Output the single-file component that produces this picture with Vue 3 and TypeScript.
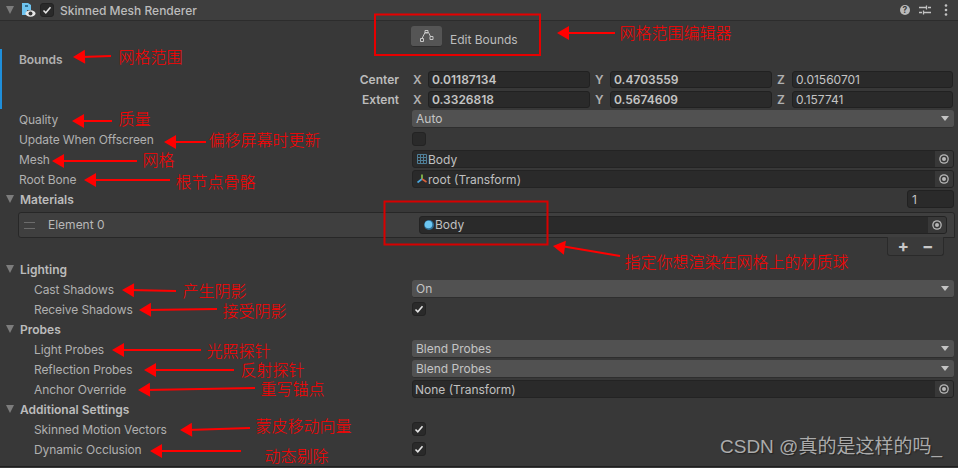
<script setup lang="ts">
interface Note { x: number; y: number; t: string }
interface Arrow { x1: number; y1: number; x2: number; y2: number }

const notes: Note[] = [
  { x: 118.5, y: 56, t: '网格范围' },
  { x: 619.5, y: 32, t: '网格范围编辑器' },
  { x: 118.5, y: 118, t: '质量' },
  { x: 208.5, y: 139, t: '偏移屏幕时更新' },
  { x: 142.5, y: 159, t: '网格' },
  { x: 175.5, y: 181, t: '根节点骨骼' },
  { x: 624.5, y: 261, t: '指定你想渲染在网格上的材质球' },
  { x: 182.5, y: 290, t: '产生阴影' },
  { x: 222.5, y: 310, t: '接受阴影' },
  { x: 206.5, y: 350, t: '光照探针' },
  { x: 240.5, y: 369, t: '反射探针' },
  { x: 260.5, y: 388, t: '重写锚点' },
  { x: 255.5, y: 425, t: '蒙皮移动向量' },
  { x: 264.5, y: 455, t: '动态剔除' },
]

const arrows: Arrow[] = [
  { x1: 111, y1: 56, x2: 73, y2: 57 },
  { x1: 615, y1: 33, x2: 557, y2: 33 },
  { x1: 112, y1: 121, x2: 72, y2: 121 },
  { x1: 206, y1: 142, x2: 164, y2: 142 },
  { x1: 137, y1: 161, x2: 52, y2: 161 },
  { x1: 170, y1: 180, x2: 84, y2: 180 },
  { x1: 620, y1: 256, x2: 553, y2: 246 },
  { x1: 176, y1: 291, x2: 122, y2: 290 },
  { x1: 217, y1: 309, x2: 139, y2: 310 },
  { x1: 201, y1: 350, x2: 112, y2: 350 },
  { x1: 234, y1: 370, x2: 144, y2: 370 },
  { x1: 255, y1: 388, x2: 138, y2: 390 },
  { x1: 250, y1: 428, x2: 180, y2: 430 },
  { x1: 241, y1: 451, x2: 150, y2: 451 },
]

function head(a: Arrow): string {
  const ang = Math.atan2(a.y1 - a.y2, a.x1 - a.x2)
  const len = 12
  const w = 7
  const bx = a.x2 + Math.cos(ang) * len
  const by = a.y2 + Math.sin(ang) * len
  const px = -Math.sin(ang) * w
  const py = Math.cos(ang) * w
  return `${a.x2},${a.y2} ${bx + px},${by + py} ${bx - px},${by - py}`
}
</script>

<template>
  <div class="page">
    <header class="head">
      <span class="tri"></span>
      <svg class="comp-icon" width="15" height="16" viewBox="0 0 15 16">
        <path d="M1 1h6l3 2v5H6v5H1z" fill="#6fc3ee" />
        <path d="M4 3h3v2H4z" fill="#2d6f93" />
        <ellipse cx="9.500" cy="11.500" rx="5" ry="3.200" fill="#e6e6e6" />
        <circle cx="9.500" cy="11.500" r="2" fill="#333" />
      </svg>
      <span class="check head-check"><svg width="10" height="10" viewBox="0 0 10 10"><path d="M1.500 5.500l2.300 2.300L8.500 2.200" fill="none" stroke="#e4e4e4" stroke-width="1.600" /></svg></span>
      <span class="title">Skinned Mesh Renderer</span>
      <span class="head-tools">
        <svg width="14" height="14" viewBox="0 0 14 14"><circle cx="7" cy="7" r="5" fill="#b9b9b9" /><text x="7" y="10" text-anchor="middle" font-size="8.500" font-weight="700" font-family="Inter" fill="#3c3c3c">?</text></svg>
        <svg width="14" height="14" viewBox="0 0 14 14"><path d="M1 4.500h7M10 4.500h3M8.500 2.500v4M1 9.500h3M6 9.500h7M5.500 7.500v4" stroke="#c4c4c4" stroke-width="1.300" fill="none" /></svg>
        <svg class="dots" width="6" height="14" viewBox="0 0 6 14"><circle cx="3" cy="2.500" r="1.300" fill="#c4c4c4" /><circle cx="3" cy="7" r="1.300" fill="#c4c4c4" /><circle cx="3" cy="11.500" r="1.300" fill="#c4c4c4" /></svg>
      </span>
    </header>

    <div class="edit-row">
      <button class="edit-btn">
        <svg width="16" height="14" viewBox="0 0 16 14"><path d="M3 9.500L6 3.500h3.500l2 4M1.500 9.500h3v3h-3zM11 7.500h3v3h-3zM6 1.500h3v2.500H6z" fill="none" stroke="#c8c8c8" stroke-width="1" /></svg>
      </button>
      <span class="edit-text">Edit Bounds</span>
    </div>

    <section class="bounds">
      <div class="row"><span class="label strong bound-label">Bounds</span></div>
      <div class="row vec">
        <span class="vec-label">Center</span>
        <span class="axis">X</span><span class="num strong">0.01187134</span>
        <span class="axis">Y</span><span class="num strong">0.4703559</span>
        <span class="axis">Z</span><span class="num">0.01560701</span>
      </div>
      <div class="row vec">
        <span class="vec-label">Extent</span>
        <span class="axis">X</span><span class="num strong">0.3326818</span>
        <span class="axis">Y</span><span class="num strong">0.5674609</span>
        <span class="axis">Z</span><span class="num">0.157741</span>
      </div>
    </section>

    <div class="row"><span class="label">Quality</span><span class="drop">Auto<i class="caret"></i></span></div>
    <div class="row"><span class="label">Update When Offscreen</span><span class="check"></span></div>
    <div class="row"><span class="label">Mesh</span>
      <span class="obj">
        <svg class="obj-icon" width="12" height="12" viewBox="0 0 12 12"><path d="M1.500 1.500h9v9h-9zM1.500 4.500h9M1.500 7.500h9M4.500 1.500v9M7.500 1.500v9" fill="none" stroke="#4f7f98" stroke-width="1" /></svg>
        <span>Body</span><i class="pick"><b></b></i>
      </span>
    </div>
    <div class="row"><span class="label">Root Bone</span>
      <span class="obj">
        <svg class="obj-icon" width="12" height="12" viewBox="0 0 12 12"><path d="M6 6V1.500" stroke="#8fcb4e" stroke-width="1.600" /><path d="M6 6L1.500 9.500" stroke="#4aa8e0" stroke-width="1.600" /><path d="M6 6l4.500 3" stroke="#d9613c" stroke-width="1.600" /></svg>
        <span>root (Transform)</span><i class="pick"><b></b></i>
      </span>
    </div>
    <div class="row fold">
      <span class="tri"></span><span class="fold-label">Materials</span>
      <span class="size">1</span>
    </div>
    <div class="list">
      <span class="grip"></span>
      <span class="el-label">Element 0</span>
      <span class="obj el-obj">
        <svg class="obj-icon" width="12" height="12" viewBox="0 0 12 12"><circle cx="6" cy="6" r="5" fill="#2f6f96" /><circle cx="5.500" cy="5.500" r="3.800" fill="#6cc6f2" /></svg>
        <span class="el-name">Body</span><i class="pick"><b></b></i>
      </span>
    </div>
    <div class="list-foot"><span class="foot-box"><b>+</b><b>−</b></span></div>

    <div class="row fold"><span class="tri"></span><span class="fold-label">Lighting</span></div>
    <div class="row sub"><span class="label">Cast Shadows</span><span class="drop">On<i class="caret"></i></span></div>
    <div class="row sub"><span class="label">Receive Shadows</span><span class="check"><svg width="10" height="10" viewBox="0 0 10 10"><path d="M1.500 5.500l2.300 2.300L8.500 2.200" fill="none" stroke="#e4e4e4" stroke-width="1.600" /></svg></span></div>
    <div class="row fold"><span class="tri"></span><span class="fold-label">Probes</span></div>
    <div class="row sub"><span class="label">Light Probes</span><span class="drop">Blend Probes<i class="caret"></i></span></div>
    <div class="row sub"><span class="label">Reflection Probes</span><span class="drop">Blend Probes<i class="caret"></i></span></div>
    <div class="row sub"><span class="label">Anchor Override</span><span class="obj"><span class="plain">None (Transform)</span><i class="pick"><b></b></i></span></div>
    <div class="row fold"><span class="tri"></span><span class="fold-label">Additional Settings</span></div>
    <div class="row sub"><span class="label">Skinned Motion Vectors</span><span class="check"><svg width="10" height="10" viewBox="0 0 10 10"><path d="M1.500 5.500l2.300 2.300L8.500 2.200" fill="none" stroke="#e4e4e4" stroke-width="1.600" /></svg></span></div>
    <div class="row sub"><span class="label">Dynamic Occlusion</span><span class="check"><svg width="10" height="10" viewBox="0 0 10 10"><path d="M1.500 5.500l2.300 2.300L8.500 2.200" fill="none" stroke="#e4e4e4" stroke-width="1.600" /></svg></span></div>
    <div class="end-line"></div>

    <svg class="marks" width="958" height="468" viewBox="0 0 958 468">
      <rect x="375" y="14.500" width="165" height="40.500" fill="none" stroke="#e60000" stroke-width="2" />
      <rect x="384.500" y="201.500" width="163" height="43" fill="none" stroke="#d80000" stroke-width="2" />
      <g v-for="(a, i) in arrows" :key="i">
        <line :x1="a.x1" :y1="a.y1" :x2="a.x2 + 8" :y2="a.y2" stroke="#f00" stroke-width="2" />
        <polygon :points="head(a)" fill="#f00" />
      </g>
    </svg>
    <span v-for="n in notes" :key="n.t + n.x" class="note" :style="{ left: n.x + 'px', top: n.y - 8 + 'px' }">{{ n.t }}</span>
    <span class="mark-text">CSDN @真的是这样的吗_</span>
  </div>
</template>

<style>
html, body { margin: 0; background: #383838; }
</style>

<style scoped>
.page {
  position: relative;
  width: 958px;
  height: 468px;
  overflow: hidden;
  background: #383838;
  color: #b0b0b0;
  font: 12px/20px Inter, "Noto Sans", sans-serif;
}
.head {
  display: flex;
  align-items: center;
  height: 20px;
  padding-left: 6px;
  background: #3e3e3e;
  border-bottom: 1px solid #2c2c2c;
}
.tri {
  width: 0;
  height: 0;
  flex: none;
  border-left: 4.500px solid transparent;
  border-right: 4.500px solid transparent;
  border-top: 8px solid #7c7c7c;
}
.comp-icon { margin-left: 7px; flex: none; }
.head-check { margin-left: 4px; }
.title { margin-left: 6px; padding-top: 2px; font-weight: 500; color: #bcbcbc; }
.head-tools {
  display: flex;
  align-items: center;
  gap: 6px;
  margin-left: auto;
  margin-right: 9px;
}
.dots { margin-left: 5px; }
.edit-row {
  display: flex;
  align-items: flex-start;
  height: 28px;
  padding-left: 411px;
}
.edit-btn {
  display: flex;
  align-items: center;
  justify-content: center;
  width: 31px;
  height: 21px;
  margin-top: 5px;
  padding: 0;
  border: 0;
  border-bottom: 1px solid #2c2c2c;
  border-radius: 3px;
  background: #555;
}
.edit-text { margin: 9px 0 0 8px; color: #bdbdbd; }
.bounds { border-left: 2px solid #1f8fdb; height: 60px; }
.bound-label { margin-left: -2px; }
.row {
  display: flex;
  align-items: center;
  height: 20px;
  padding-left: 19px;
  padding-right: 4px;
}
.sub { padding-left: 34px; }
.fold { padding-left: 6px; }
.label { width: 393px; flex: none; padding-top: 2px; letter-spacing: -0.1px; }
.sub .label { width: 378px; }
.strong { font-weight: 600; }
.fold-label { margin-left: 6px; padding-top: 2px; font-weight: 600; color: #bcbcbc; }
.vec { padding-left: 0; }
.vec-label { width: 397px; padding-top: 2px; text-align: right; font-weight: 600; color: #bcbcbc; flex: none; }
.axis {
  width: 15px;
  margin-left: 5px;
  padding-top: 2px;
  flex: none;
  color: #b0b0b0;
  font-weight: 600;
}
.vec-label + .axis { margin-left: 14px; }
.num {
  width: 162px;
  height: 17px;
  line-height: 16px;
  padding-left: 3px;
  box-sizing: border-box;
  flex: none;
  background: #2a2a2a;
  border: 1px solid #212121;
  border-radius: 3px;
  color: #c4c4c4;
}
.num:last-child { width: 161px; font-weight: 400; }
.drop {
  position: relative;
  flex: 1;
  height: 17px;
  line-height: 18px;
  padding-left: 4px;
  background: #515151;
  border-bottom: 1px solid #2e2e2e;
  border-radius: 3px;
  color: #c4c4c4;
}
.caret {
  position: absolute;
  right: 5px;
  top: 6px;
  width: 0;
  height: 0;
  border-left: 4px solid transparent;
  border-right: 4px solid transparent;
  border-top: 5px solid #c4c4c4;
}
.check {
  display: flex;
  align-items: center;
  justify-content: center;
  width: 14px;
  height: 14px;
  flex: none;
  box-sizing: border-box;
  background: #2a2a2a;
  border: 1px solid #232323;
  border-radius: 3px;
}
.obj {
  display: flex;
  align-items: center;
  flex: 1;
  height: 18px;
  padding-left: 1px;
  background: #2a2a2a;
  border: 1px solid #232323;
  border-radius: 3px;
  box-sizing: border-box;
  color: #c0c0c0;
  overflow: hidden;
}
.obj > span { padding-top: 2px; }
.obj > .el-name { padding-top: 0; }
.obj-icon { margin: 0 0 0 2px; flex: none; }
.plain { margin-left: 1px; }
.pick {
  display: flex;
  align-items: center;
  justify-content: center;
  width: 18px;
  height: 16px;
  margin-left: auto;
  flex: none;
  background: #383838;
}
.pick b {
  display: block;
  width: 4px;
  height: 4px;
  border-radius: 50%;
  background: #b8b8b8;
  box-shadow: 0 0 0 1.500px #383838, 0 0 0 2.800px #b8b8b8;
}
.size {
  width: 47px;
  height: 18px;
  line-height: 17px;
  margin-left: auto;
  padding-left: 4px;
  box-sizing: border-box;
  background: #2a2a2a;
  border: 1px solid #212121;
  border-radius: 3px;
  color: #c4c4c4;
}
.list {
  display: flex;
  align-items: center;
  height: 26px;
  margin: 3px 3px 0 18px;
  padding: 0 7px 0 5px;
  box-sizing: border-box;
  background: #3f3f3f;
  border: 1px solid #272727;
  border-radius: 3px 3px 0 3px;
}
.grip {
  width: 11px;
  height: 5px;
  flex: none;
  border-top: 1px solid #6c6c6c;
  border-bottom: 1px solid #6c6c6c;
}
.el-label { width: 371px; margin-left: 13px; flex: none; color: #b8b8b8; }
.el-obj { flex: 1; }
.list-foot {
  display: flex;
  justify-content: flex-end;
  height: 21px;
  padding-right: 14px;
}
.foot-box {
  display: flex;
  justify-content: center;
  gap: 13px;
  align-items: center;
  width: 57px;
  height: 19px;
  margin-top: -1px;
  box-sizing: border-box;
  background: #3a3a3a;
  border: 1px solid #2a2a2a;
  border-top: 0;
  border-radius: 0 0 3px 3px;
  color: #c8c8c8;
  font-size: 17px;
}
.end-line {
  height: 1px;
  margin-top: 7px;
  background: #1f1f1f;
}
.marks { position: absolute; left: 0; top: 0; pointer-events: none; }
.note {
  position: absolute;
  font: 300 16px/16px "Noto Sans CJK SC", sans-serif;
  color: #f00;
  white-space: nowrap;
}
.mark-text {
  position: absolute;
  left: 720px;
  top: 435px;
  font: 19px/24px "Liberation Sans", "Noto Sans CJK SC", sans-serif;
  color: #ababab;
  text-shadow: 1px 1px 1px #222;
  white-space: nowrap;
}
</style>
